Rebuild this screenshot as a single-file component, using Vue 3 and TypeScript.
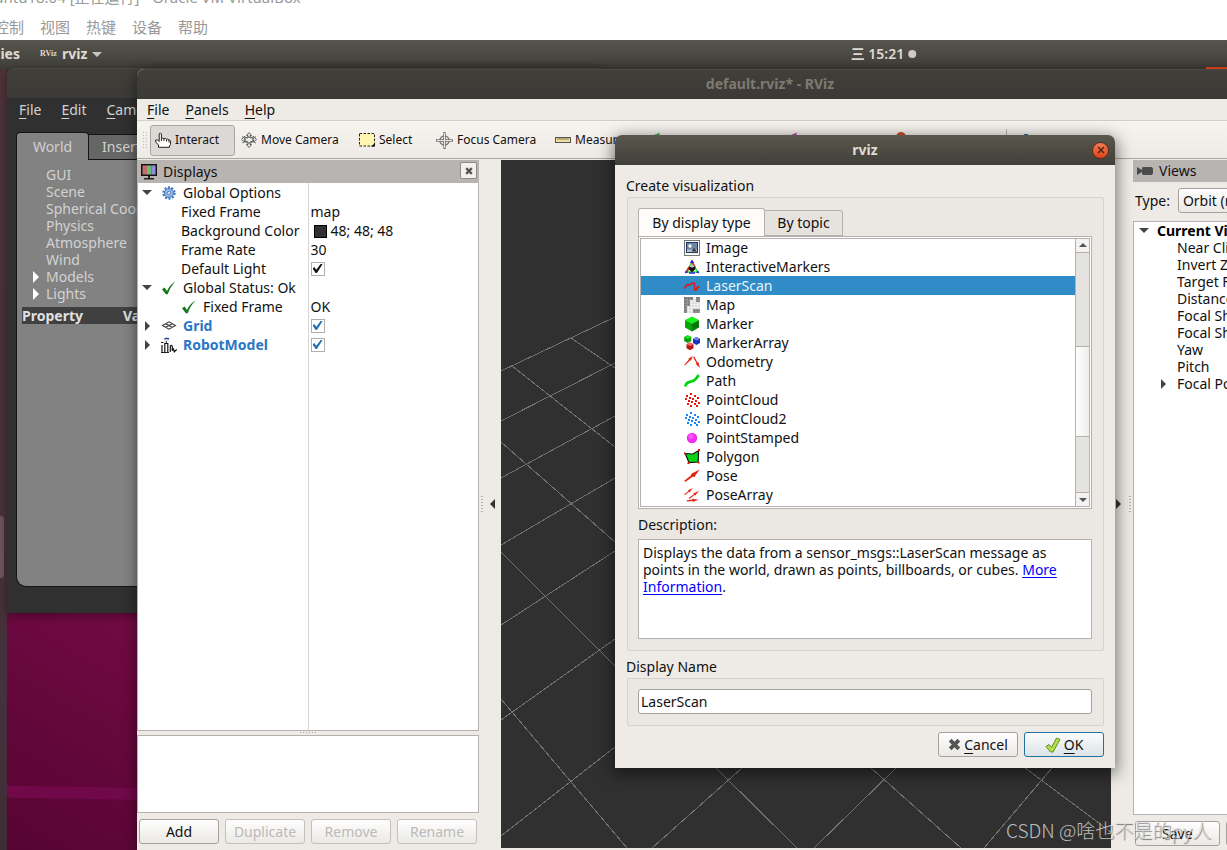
<script setup lang="ts">
import { ref } from 'vue'

interface PropertyRow {
  label: string
  value?: string
  arrow?: 'open' | 'closed'
  icon?: string
  level: 'top' | 'child' | 'status'
  strong?: boolean
  checked?: boolean
  swatch?: boolean
}

interface DisplayType {
  name: string
  icon: string
}

const hostMenu: string[] = ['控制', '视图', '热键', '设备', '帮助']

const worldItems = ['GUI', 'Scene', 'Spherical Coordinates', 'Physics', 'Atmosphere', 'Wind', 'Models', 'Lights']
const expandable = new Set(['Models', 'Lights'])

const properties = ref<PropertyRow[]>([
  { label: 'Global Options', arrow: 'open', icon: 'gear', level: 'top' },
  { label: 'Fixed Frame', value: 'map', level: 'child' },
  { label: 'Background Color', value: '48; 48; 48', level: 'child', swatch: true },
  { label: 'Frame Rate', value: '30', level: 'child' },
  { label: 'Default Light', level: 'child', checked: true },
  { label: 'Global Status: Ok', arrow: 'open', icon: 'check', level: 'top' },
  { label: 'Fixed Frame', value: 'OK', icon: 'check', level: 'status' },
  { label: 'Grid', arrow: 'closed', icon: 'grid', level: 'top', strong: true, checked: true },
  { label: 'RobotModel', arrow: 'closed', icon: 'robot', level: 'top', strong: true, checked: true },
])

const displayTypes: DisplayType[] = [
  { name: 'Image', icon: 'image' },
  { name: 'InteractiveMarkers', icon: 'interactive' },
  { name: 'LaserScan', icon: 'laser' },
  { name: 'Map', icon: 'map' },
  { name: 'Marker', icon: 'marker' },
  { name: 'MarkerArray', icon: 'markers' },
  { name: 'Odometry', icon: 'odometry' },
  { name: 'Path', icon: 'path' },
  { name: 'PointCloud', icon: 'cloud-red' },
  { name: 'PointCloud2', icon: 'cloud-blue' },
  { name: 'PointStamped', icon: 'point' },
  { name: 'Polygon', icon: 'polygon' },
  { name: 'Pose', icon: 'pose' },
  { name: 'PoseArray', icon: 'poses' },
]

const selected = ref('LaserScan')
const displayName = ref('LaserScan')

const viewItems = [
  'Near Clip Distance',
  'Invert Z Axis',
  'Target Frame',
  'Distance',
  'Focal Shape Size',
  'Focal Shape Fixed',
  'Yaw',
  'Pitch',
  'Focal Point',
]

function choose(name: string): void {
  selected.value = name
  displayName.value = name
}
</script>

<template>
  <div class="screen">
    <svg class="sprites" aria-hidden="true">
      <defs>
        <symbol id="gear" viewBox="0 0 16 16">
          <circle cx="8" cy="8" r="5.500" fill="none" stroke="#4377bd" stroke-width="2.400" stroke-dasharray="2 1.450" />
          <circle cx="8" cy="8" r="4.500" fill="#a9c5ea" stroke="#4a7dc2" />
          <path d="M8 4V12M4 8H12M5.200 5.200 10.800 10.800M10.800 5.200 5.200 10.800" stroke="#6d98d2" />
          <circle cx="8" cy="8" r="1.500" fill="#fff" stroke="#4a7dc2" stroke-width=".8" />
        </symbol>
        <symbol id="check" viewBox="0 0 16 16">
          <path d="M1 9.200 3.600 7.400 6 11C8 6.700 10.600 3.600 14.400 1.200 11 5 8.600 9 6.700 14.200H4.900Z" fill="#16761b" />
        </symbol>
        <symbol id="grid" viewBox="0 0 16 16">
          <path d="M1.500 7.500 8 3.800 14.500 7.500 8 11.200ZM4.800 5.700 11.200 9.300M4.800 9.300 11.200 5.700" fill="none" stroke="#3a3a3a" stroke-width="1.100" />
        </symbol>
        <symbol id="robot" viewBox="0 0 16 16">
          <path d="M3.500 1.500C5 .3 7 .4 8 1.800V3H3.500Z" fill="#fff" stroke="#888" stroke-width=".5" />
          <path d="M3.500 1.600H8" stroke="#2345b5" stroke-width="1.300" />
          <path d="M1 15V8M3.800 15V6.500H6.800V15M9.300 15V9Q10.500 7.500 11.300 9.500V14M12 11 13.300 14.800 15.700 12.500" fill="none" stroke="#151515" stroke-width="1.200" />
          <path d="M0 5.500H2.500M5.300 4V6M0 15.500H8" stroke="#222" />
        </symbol>
        <symbol id="image" viewBox="0 0 16 16">
          <rect x=".5" y=".5" width="15" height="15" fill="#f6f6f4" stroke="#777" />
          <rect x="2.500" y="2.500" width="11" height="10" fill="#6c86ad" stroke="#253a5c" />
          <path d="M3 9.500H13V12H3Z" fill="#b4c1d1" />
          <circle cx="6" cy="6" r="1.700" fill="#fffde0" />
          <path d="M7.500 11.500 10 8 13 11.500Z" fill="#35353a" />
        </symbol>
        <symbol id="interactive" viewBox="0 0 16 16">
          <path d="M2.500 13 8 3 13.500 13Z" fill="none" stroke="#25e02b" stroke-width="1.500" />
          <path d="M8 3 11 8.500M2.500 13 5 8.500" stroke="#ee2222" stroke-width="2" />
          <path d="M8 .6 10.200 4H5.800ZM.8 14.500 1.600 11.400 4 13.500ZM15.200 14.500 12 13.500 14.400 11.400Z" fill="#2320ed" />
          <path d="M5 14H11" stroke="#2320ed" stroke-width="1.500" />
          <path d="M8 5.500 11.200 7.500V10.500L8 13.300 4.800 10.500V7.500Z" fill="#111" />
          <path d="M8 5.300 11 7.200 8 8.800 5 7.200Z" fill="#c5c5c5" />
        </symbol>
        <symbol id="laser" viewBox="0 0 16 16">
          <path d="M.7 10.500 1.600 8.500 3.500 6.600 5 7.300 6 6.200 8.300 5.400 10.300 5.200 10.700 11.800 12.200 12 13.500 9 15.300 9.500" fill="none" stroke="#d3202d" stroke-width="1.900" stroke-linejoin="round" />
        </symbol>
        <symbol id="map" viewBox="0 0 16 16">
          <rect width="16" height="16" fill="#fafafa" />
          <path d="M0 0H9V3H6V9H3V16H0ZM12 0H16V5H12ZM9 12H16V16H9Z" fill="#777" />
          <path d="M3 0V16M6 0V16M9 0V16M12 0V16M15 0V16M0 3H16M0 6H16M0 9H16M0 12H16M0 15H16" stroke="#b8b8b8" stroke-width=".5" />
        </symbol>
        <symbol id="marker" viewBox="0 0 16 16">
          <path d="M8 .5 15 4 8 7.500 1 4Z" fill="#15f51c" />
          <path d="M1 4 8 7.500V15.500L1 11.500Z" fill="#04a80a" />
          <path d="M15 4 8 7.500V15.500L15 11.500Z" fill="#047d08" />
        </symbol>
        <symbol id="markers" viewBox="0 0 16 16">
          <path d="M3.700.3 7.300 2V6L3.700 8 .2 6V2Z" fill="#079b0e" /><path d="M3.700.3 7.300 2 3.700 4 .2 2Z" fill="#19ed20" />
          <path d="M12.500 2 16 3.800V8L12.500 10 9 8V3.800Z" fill="#1d32b5" /><path d="M12.500 2 16 3.800 12.500 5.500 9 3.800Z" fill="#6b87f5" />
          <path d="M6 7.500 9.500 9.200V13.200L6 15.300 2.500 13.200V9.200Z" fill="#b61919" /><path d="M6 7.500 9.500 9.200 6 11 2.500 9.200Z" fill="#ff6964" />
        </symbol>
        <symbol id="odometry" viewBox="0 0 16 16">
          <path d="M.2 10.900 4.900 5.400 4.300 4.800 8.800 2 6.900 6.700 6.200 6.200 1 11.600ZM9 3 10.300 2.500 13.300 8.300 14.300 8 16 14 11.800 10 12.500 9.200Z" fill="#e92413" />
        </symbol>
        <symbol id="path" viewBox="0 0 16 16">
          <path d="M1.300 13.500C1.900 10.500 3.500 9.200 6.500 8.700 10.200 8.400 12 6.300 14.700 2" fill="none" stroke="#00d80c" stroke-width="2.800" />
        </symbol>
        <symbol id="cloud" viewBox="0 0 16 16">
          <path d="M6 1h2v2H6ZM2 3h2v2H2ZM10 3h2v2h-2ZM5 5h2v2H5ZM1 6h2v2H1ZM8 6h2v2H8ZM13 5h2v2h-2ZM4 8h2v2H4ZM11 8h2v2h-2ZM7 9h2v2H7ZM3 11h2v2H3ZM10 11h2v2h-2ZM14 10h2v2h-2ZM6 13h2v2H6ZM12 13h2v2h-2Z" fill="currentColor" />
        </symbol>
        <symbol id="cloud-red" viewBox="0 0 16 16"><use href="#cloud" color="#ee1414" /></symbol>
        <symbol id="cloud-blue" viewBox="0 0 16 16"><use href="#cloud" color="#1688f3" /></symbol>
        <symbol id="point" viewBox="0 0 16 16">
          <circle cx="8" cy="8" r="5.200" fill="#ef2eee" /><circle cx="7" cy="6.500" r="2.500" fill="#fb5afa" />
        </symbol>
        <symbol id="polygon" viewBox="0 0 16 16">
          <path d="M1.200 4.500 9 5 14.600 1.500 14.200 13 5 13.700Z" fill="#09d413" stroke="#111" stroke-width="1.200" />
          <path d="M0 3.500h2v2H0ZM14 0h2v2h-2ZM3.500 13h2v2h-2ZM13.500 12.500h2v2h-2Z" fill="#ee1414" />
        </symbol>
        <symbol id="pose" viewBox="0 0 16 16">
          <path d="M.3 12.700 8 6.600 7.300 5.800 15.700 1.500 10.300 9 9.400 8.200 1.300 14Z" fill="#ed2412" /><path d="M7.500 6 10.300 8.800" stroke="#8e1308" />
        </symbol>
        <symbol id="poses" viewBox="0 0 16 16">
          <path d="M.3 7.300 4.500 4.100 4 3.300 8.700 1 5.600 5.400 5 4.800 .8 8.300ZM4.700 11 9.800 7.200 9.300 6.500 15 3.800 11.300 8.600 10.600 8.100 5.300 12ZM2.700 13.200 8.400 12.600V11.700L14.500 12.800 8.700 15V14L2.900 14.500Z" fill="#ed2412" />
        </symbol>
        <symbol id="hand" viewBox="0 0 16 16">
          <path d="M3.500 15.300V13L.7 10V8H2.500L4.200 9.500V2Q5.300-.2 6.400 2V6.500Q7.800 5.300 8.900 6.800 10.400 5.600 11.500 7.300 13.100 6.200 14 8 15.500 8 15.500 10V12.500L14.500 14V15.300Z" fill="#fff" stroke="#222" stroke-linejoin="round" />
          <path d="M6.400 6.500V9M8.900 6.800V9M11.500 7.300V9.500M14 8V10.500" fill="none" stroke="#222" />
        </symbol>
        <symbol id="move" viewBox="0 0 16 16">
          <path d="M8 .6 10.500 3.500H9V6L12.200 5.500V4L15.500 7.500 12.500 10V8.500L9 10V12.500H10.500L8 15.500 5.500 12.500H7V10L3.500 8.500V10L.5 7.500 3.800 4V5.500L7 6V3.500H5.500Z" fill="#eee" stroke="#555" stroke-width=".9" />
          <ellipse cx="8" cy="8" rx="4.500" ry="3" fill="none" stroke="#666" stroke-width=".9" />
          <path d="M1 4.500 5 7.500M15 4.500 11 7.500M1 11 5 9M15 11 11 9" stroke="#555" stroke-width=".8" />
        </symbol>
        <symbol id="select" viewBox="0 0 16 14">
          <rect x=".5" y=".5" width="15" height="12.500" fill="#fff6b2" stroke="#222" stroke-dasharray="2.500 1.500" />
          <path d="M12 13.500H16V10Z" fill="#111" />
        </symbol>
        <symbol id="focus" viewBox="0 0 17 17">
          <circle cx="8.500" cy="8.500" r="4.500" fill="none" stroke="#777" stroke-width="1.500" />
          <circle cx="8.500" cy="8.500" r="2" fill="none" stroke="#777" />
          <path d="M8.500 0V17M0 8.500H17" stroke="#777" stroke-width="2.400" />
          <path d="M8.500 1V16M1 8.500H16" stroke="#f5f2ee" stroke-width=".9" />
        </symbol>
        <symbol id="ruler" viewBox="0 0 16 6">
          <rect x=".5" y=".5" width="15" height="5" fill="#f0dfa3" stroke="#555" />
          <path d="M3 1V3M5 1V3M7 1V3M9 1V3M11 1V3M13 1V3" stroke="#66572b" stroke-width=".8" />
        </symbol>
        <symbol id="arrow-up" viewBox="0 0 16 16"><path d="M2 14 10 4 9 3 15 .5 13 7 12 6 4 15Z" fill="currentColor" /></symbol>
      </defs>
    </svg>

    <header class="host">
      <div class="host-title">Ubuntu18.04 [正在运行] - Oracle VM VirtualBox</div>
      <nav class="host-menu">
        <button v-for="item in hostMenu" :key="item" type="button">{{ item }}</button>
      </nav>
    </header>

    <main class="desktop">
      <div class="wallpaper"><span class="wave"></span></div>
      <div class="launcher"><span class="launcher-tile"></span></div>

      <div class="panel">
        <span class="panel-activities">Activities</span>
        <button type="button" class="panel-app"><b class="logo">RViz</b>rviz<i class="caret"></i></button>
        <span class="clock">三 15:21<i class="dot"></i></span>
      </div>

      <section class="window gazebo">
        <div class="dark-title"></div>
        <nav class="menu">
          <button type="button"><u>F</u>ile</button>
          <button type="button"><u>E</u>dit</button>
          <button type="button"><u>C</u>amera</button>
        </nav>
        <div class="gz-tabs">
          <button type="button" class="gz-tab active">World</button>
          <button type="button" class="gz-tab">Insert</button>
        </div>
        <div class="gz-pane">
          <ul>
            <li v-for="item in worldItems" :key="item"><i v-if="expandable.has(item)" class="tri"></i>{{ item }}</li>
          </ul>
          <div class="gz-head"><b>Property</b><b>Value</b></div>
        </div>
      </section>

      <section class="window rviz">
        <div class="dark-title">default.rviz* - RViz</div>
        <nav class="menu">
          <button type="button"><u>F</u>ile</button>
          <button type="button"><u>P</u>anels</button>
          <button type="button"><u>H</u>elp</button>
        </nav>
        <div class="toolbar">
          <span class="grip"></span>
          <button type="button" class="tool on"><svg><use href="#hand" /></svg>Interact</button>
          <button type="button" class="tool camera"><svg><use href="#move" /></svg>Move Camera</button>
          <button type="button" class="tool pick"><svg class="i-select"><use href="#select" /></svg>Select</button>
          <button type="button" class="tool focus"><svg class="i-focus"><use href="#focus" /></svg>Focus Camera</button>
          <button type="button" class="tool measure"><svg class="i-ruler"><use href="#ruler" /></svg>Measure</button>
          <button type="button" class="tool estimate" aria-label="2D Pose Estimate"><svg><use href="#arrow-up" /></svg></button>
          <button type="button" class="tool goal" aria-label="2D Nav Goal"><svg><use href="#arrow-up" /></svg></button>
          <button type="button" class="tool publish" aria-label="Publish Point"><svg viewBox="0 0 16 16"><circle cx="8" cy="5" r="5" fill="#d04a2c" /></svg></button>
          <span class="divider"></span>
          <button type="button" class="tool" aria-label="Add tool"><svg viewBox="0 0 16 16"><path d="M6 2h4v4h4v4h-4v4H6v-4H2V6h4Z" fill="#2f62a8" /></svg></button>
        </div>

        <div class="work">
          <aside class="displays">
            <div class="dock-title">
              <svg viewBox="0 0 16 16">
                <rect x=".5" y=".5" width="15" height="11" fill="#222" stroke="#111" />
                <path d="M1.500 1.500H6V10.500H1.500Z" fill="#c46b6b" /><path d="M6 1.500H10.500V10.500H6Z" fill="#69bd70" /><path d="M10.500 1.500H14.500V10.500H10.500Z" fill="#918ee0" />
                <path d="M7 12H9V14H7ZM3 14H13V15.500H3Z" fill="#222" />
              </svg>
              <span>Displays</span>
              <button type="button" class="dock-close" aria-label="Close">
                <svg viewBox="0 0 8 8"><path d="M1.200 1.200 6.800 6.800M6.800 1.200 1.200 6.800" stroke="#555" stroke-width="2.400" /></svg>
              </button>
            </div>
            <div class="tree">
              <table>
                <tbody>
                  <tr v-for="(row, index) in properties" :key="index">
                    <th scope="row">
                      <span class="name" :class="[row.level, { strong: row.strong }]">
                        <i class="twist" :class="row.arrow"></i>
                        <svg v-if="row.icon"><use :href="'#' + row.icon" /></svg>
                        {{ row.label }}
                      </span>
                    </th>
                    <td>
                      <input v-if="row.checked !== undefined" v-model="row.checked" type="checkbox" :class="{ blue: row.strong }" :aria-label="row.label" />
                      <i v-if="row.swatch" class="swatch"></i>{{ row.value }}
                    </td>
                  </tr>
                  <tr class="rest"><th></th><td></td></tr>
                </tbody>
              </table>
            </div>
            <div class="splitter"></div>
            <div class="help"></div>
            <div class="actions">
              <button type="button" class="btn">Add</button>
              <button type="button" class="btn" disabled>Duplicate</button>
              <button type="button" class="btn" disabled>Remove</button>
              <button type="button" class="btn" disabled>Rename</button>
            </div>
          </aside>

          <div class="strip left"><span class="vgrip"></span><i class="fold"></i></div>

          <div class="render">
            <svg aria-hidden="true">
              <path
                d="M0 211 114 157M0 261 114 203M0 318 114 256M0 385 114 318M0 465 114 391M0 560 114 479M0 676 114 587M151 688 241 608M313 688 395 608M483 688 551 608M11 206 114 287M70 178 114 208M0 282 114 382M0 392 114 506M0 539 126 688M214 607 296 688M370 608 460 688M524 608 610 672"
                fill="none" stroke="#8d8d8d" stroke-width="1" shape-rendering="crispEdges" opacity=".7"
              />
            </svg>
          </div>

          <div class="strip right"><i class="fold"></i><span class="vgrip"></span></div>

          <aside class="views">
            <div class="dock-title">
              <svg viewBox="0 0 16 16"><path d="M0 4 5 7V4.500L6.500 4H14.500L16 5.500V10.500L14.500 12H6.500L5 11V9L0 12Z" fill="#4b4b4b" /></svg>
              <span>Views</span>
            </div>
            <div class="type-row">
              <label for="view-type">Type:</label>
              <select id="view-type"><option>Orbit (rviz)</option></select>
            </div>
            <div class="view-tree">
              <div class="view-root"><i class="twist open"></i>Current View</div>
              <ul>
                <li v-for="item in viewItems" :key="item"><i v-if="item === 'Focal Point'" class="twist closed"></i>{{ item }}</li>
              </ul>
            </div>
            <div class="actions">
              <button type="button" class="btn">Save</button>
              <button type="button" class="btn" aria-label="Remove view"></button>
              <button type="button" class="btn" aria-label="Rename view"></button>
            </div>
          </aside>
        </div>
      </section>

      <i class="alert-edge"></i>

      <form class="dialog" @submit.prevent>
        <div class="dialog-title">
          rviz
          <button type="button" aria-label="Close"><svg viewBox="0 0 8 8"><path d="M1 1 7 7M7 1 1 7" stroke="#4b2012" stroke-width="1.400" /></svg></button>
        </div>
        <div class="dialog-body">
          <div class="caption">Create visualization</div>
          <div class="group">
            <div class="tabs" role="tablist">
              <button type="button" role="tab" class="tab active" aria-selected="true">By display type</button>
              <button type="button" role="tab" class="tab" aria-selected="false">By topic</button>
            </div>
            <div class="list-frame">
              <ul class="types" role="listbox" aria-label="Display types">
                <li
                  v-for="type in displayTypes"
                  :key="type.name"
                  role="option"
                  :aria-selected="type.name === selected"
                  :class="{ selected: type.name === selected }"
                  @click="choose(type.name)"
                >
                  <svg><use :href="'#' + type.icon" /></svg><span>{{ type.name }}</span>
                </li>
              </ul>
              <div class="scroll">
                <span class="step up"></span>
                <span class="track"></span>
                <span class="thumb"></span>
                <span class="track short"></span>
                <span class="step down"></span>
              </div>
            </div>
            <div class="caption description">Description:</div>
            <div class="text">
              Displays the data from a sensor_msgs::LaserScan message as<br />
              points in the world, drawn as points, billboards, or cubes. <a href="#more">More<br />Information</a>.
            </div>
          </div>
          <label class="caption second" for="display-name">Display Name</label>
          <div class="group name-group">
            <input id="display-name" v-model="displayName" type="text" />
          </div>
          <div class="dialog-buttons">
            <button type="button" class="btn">
              <svg class="i-cancel" viewBox="0 0 12 12"><path d="M2 2 10 10M10 2 2 10" stroke="#555" stroke-width="3.600" /></svg><span><u>C</u>ancel</span>
            </button>
            <button type="submit" class="btn primary">
              <svg viewBox="0 0 16 16"><path d="M1 9.500 4 7.500 6.500 10.500 11.500 1 15 2.500 8 15H5.500Z" fill="#b4dc4c" stroke="#5d8f27" /></svg><span><u>O</u>K</span>
            </button>
          </div>
        </div>
      </form>

      <div class="watermark">CSDN @啥也不是的py人</div>
    </main>
  </div>
</template>

<style>
html,
body,
#app {
  height: 100%;
}

body {
  overflow: hidden;
}
</style>

<style scoped>
* {
  box-sizing: border-box;
}

.screen {
  display: flex;
  flex-direction: column;
  height: 100%;
  overflow: hidden;
  background: #fff;
  color: #111;
  font: 14px/18px "Noto Sans", "Noto Sans CJK SC", sans-serif;
}

.sprites {
  position: absolute;
  width: 0;
  height: 0;
}

button,
input,
select {
  margin: 0;
  padding: 0;
  border: 0;
  background: none;
  color: inherit;
  font: inherit;
}

ul {
  margin: 0;
  padding: 0;
  list-style: none;
}

svg {
  display: block;
  flex: none;
  width: 16px;
  height: 16px;
}

u {
  text-decoration-thickness: 1px;
  text-underline-offset: 3px;
}

.host {
  height: 40px;
  overflow: hidden;
  color: #999;
  font: 15px/20px "Noto Sans CJK SC", sans-serif;
  white-space: nowrap;
}

.host-title {
  height: 17px;
  margin: -13px 0 0 -26px;
  font-family: "Noto Sans", "Noto Sans CJK SC", sans-serif;
}

.host-menu {
  display: flex;
  gap: 16px;
  margin: 13px 0 0 -6px;
}

.desktop {
  position: relative;
  flex: 1;
  overflow: hidden;
}

.wallpaper {
  position: absolute;
  inset: 0;
  overflow: hidden;
  background: linear-gradient(30deg, #560432, #700a43 260px);
}

.wave {
  position: absolute;
  left: 0;
  bottom: 50px;
  width: 300px;
  height: 12px;
  background: #70084a;
  transform: rotate(1deg);
}

.launcher {
  position: absolute;
  left: 0;
  top: 28px;
  bottom: 0;
  width: 7px;
  background: linear-gradient(#4e343a, #45313b 80%, #3f2d35);
}

.launcher-tile {
  position: absolute;
  left: 0;
  top: 448px;
  width: 4px;
  height: 62px;
  border-radius: 0 3px 3px 0;
  background: #6d555e;
}

.panel {
  position: absolute;
  inset: 0 0 auto;
  display: flex;
  align-items: center;
  height: 30px;
  padding-bottom: 2px;
  background: linear-gradient(#56544c, #403f3a 28px, #383733);
  color: #dfdbd2;
  font-weight: 700;
}

.panel-activities {
  width: 20px;
  direction: rtl;
  white-space: nowrap;
}

.panel-app {
  display: flex;
  align-items: center;
  margin-left: 20px;
}

.logo {
  width: 22px;
  font: bold 8px/10px "Liberation Serif", serif;
  text-align: left;
}

.caret {
  margin-left: 5px;
  border: 5px solid transparent;
  border-top-color: #c9c5bd;
  border-bottom: 0;
}

.clock {
  position: absolute;
  left: 72%;
  display: flex;
  align-items: center;
  font-weight: 600;
  transform: translateX(-50%);
}

.dot {
  width: 8px;
  height: 8px;
  margin-left: 4px;
  border-radius: 50%;
  background: #cfccc6;
}

.window {
  position: absolute;
  display: flex;
  flex-direction: column;
}

.dark-title {
  flex: none;
  height: 30px;
  border-top: 1px solid #4a4943;
  border-radius: 7px 7px 0 0;
  background: linear-gradient(#403f3a, #3b3a36);
  color: #7d7a72;
  font-weight: 700;
  line-height: 28px;
  text-align: center;
}

.gazebo {
  top: 28px;
  left: 7px;
  width: 600px;
  height: 545px;
  border-radius: 7px 7px 0 0;
  background: #303030;
  box-shadow: 0 2px 10px rgba(0, 0, 0, 0.4);
  color: #d2d2d2;
}

.menu {
  display: flex;
  flex: none;
  gap: 16px;
  height: 21px;
  padding-left: 10px;
}

.gazebo .menu {
  gap: 20px;
  height: 34px;
  padding: 0 0 10px 12px;
}

.gz-tabs {
  display: flex;
  align-items: flex-end;
  height: 28px;
  padding-left: 9px;
}

.gz-tab {
  width: 66px;
  height: 26px;
  border: 1px solid #141414;
  border-left: 0;
  background: #666;
  color: #d0d0d0;
}

.gz-tab.active {
  width: 73px;
  height: 28px;
  border-left: 1px solid #141414;
  border-bottom: 0;
  border-radius: 4px 4px 0 0;
  background: #828282;
}

.gz-pane {
  flex: 1;
  margin: 0 10px 26px 9px;
  padding: 6px 5px;
  border: 1px solid #141414;
  border-top: 0;
  border-radius: 0 0 10px 10px;
  background: #828282;
}

.gz-pane li {
  display: flex;
  align-items: center;
  position: relative;
  height: 17px;
  padding-left: 24px;
}

.tri {
  position: absolute;
  left: 11px;
  border: 6px solid transparent;
  border-left-color: #fff;
  border-right: 0;
}

.gz-head {
  display: flex;
  height: 17px;
  margin-top: 5px;
  background: #404040;
  color: #e0e0e0;
  line-height: 17px;
}

.gz-head b {
  width: 101px;
}

.rviz {
  top: 29px;
  right: -176px;
  bottom: 0;
  left: 137px;
  border-radius: 7px 7px 0 0;
  background: #eeebe6;
  box-shadow: 0 2px 14px rgba(0, 0, 0, 0.5);
}

.toolbar {
  display: flex;
  flex: none;
  align-items: center;
  height: 39px;
  padding-top: 1px;
  border-top: 1px solid #d2cec9;
  border-bottom: 1px solid #aaa7a3;
  background: linear-gradient(#f7f4f0, #eeeae5);
  font-size: 12px;
}

.grip {
  width: 5px;
  height: 18px;
  margin: 0 3px 0 5px;
  background: radial-gradient(circle, #bbb7b2 1px, transparent 1px) 0 0 / 3px 3px;
}

.tool {
  display: flex;
  flex: none;
  align-items: center;
  gap: 4px;
  height: 31px;
  padding-left: 5px;
  white-space: nowrap;
}

.tool.on {
  width: 85px;
  padding-left: 4px;
  border: 1px solid #aaa6a2;
  border-radius: 3px;
  background: #dcd8d5;
}

.tool.camera {
  width: 118px;
  padding-left: 6px;
}

.tool.pick {
  width: 78px;
  padding-left: 6px;
}

.tool.focus {
  width: 119px;
}

.tool.measure {
  width: 90px;
}

.tool.estimate {
  width: 137px;
  color: #35b94a;
}

.tool.goal {
  width: 111px;
  color: #cc38b5;
}

.tool.publish {
  width: 118px;
}

.divider {
  width: 1px;
  height: 22px;
  margin-right: 6px;
  background: #bbb7b2;
}

.i-select {
  height: 14px;
}

.i-focus {
  width: 17px;
  height: 17px;
}

.i-ruler {
  height: 6px;
}

.work {
  display: flex;
  flex: 1;
  min-height: 0;
  padding: 1px 0 2px;
}

.displays {
  display: flex;
  flex: none;
  flex-direction: column;
  width: 342px;
}

.dock-title {
  display: flex;
  flex: none;
  align-items: center;
  gap: 6px;
  height: 23px;
  padding: 0 2px 0 4px;
  background: #b8b4b1;
}

.dock-close {
  display: grid;
  place-items: center;
  width: 17px;
  height: 17px;
  margin: -2px 0 0 auto;
  border: 1px solid #8f8c88;
  border-radius: 2px;
  background: #f3f1ee;
}

.dock-close svg {
  width: 8px;
  height: 8px;
}

.tree {
  flex: 1;
  min-height: 0;
  border: 1px solid #b5b1ae;
  border-top: 0;
  background: #fff;
}

table {
  width: 100%;
  height: 100%;
  border-collapse: collapse;
  table-layout: fixed;
}

tr {
  height: 19px;
}

tr.rest {
  height: auto;
}

th,
td {
  padding: 0;
  font-weight: 400;
  text-align: left;
  white-space: nowrap;
}

th {
  width: 170px;
  border-right: 1px solid #d9d6d3;
}

td {
  padding-left: 2px;
}

.name {
  display: flex;
  align-items: center;
  height: 19px;
}

.name.top svg {
  margin: 0 6px 0 5px;
}

.name.child {
  padding-left: 27px;
}

.name.status {
  padding-left: 27px;
}

.name.status svg {
  margin: 0 6px 0 0;
}

.name.strong {
  color: #2a76c6;
  font-weight: 700;
}

.twist {
  display: flex;
  flex: none;
  align-items: center;
  justify-content: center;
  width: 16px;
}

.name.top .twist {
  width: 18px;
}

.twist.open::before {
  border: 5px solid transparent;
  border-top-color: #444;
  border-bottom: 0;
  content: "";
}

.twist.closed::before {
  border: 5px solid transparent;
  border-left-color: #444;
  border-right: 0;
  content: "";
}

.swatch {
  display: inline-block;
  width: 13px;
  height: 13px;
  margin: 0 4px 0 3px;
  border: 1px solid #000;
  background: #303030;
  vertical-align: -2px;
}

input[type="checkbox"] {
  display: grid;
  place-items: center;
  width: 14px;
  height: 14px;
  border: 1px solid #b2aeaa;
  background: #fff;
  color: #111;
  appearance: none;
}

input[type="checkbox"].blue {
  color: #2470b5;
}

input[type="checkbox"]:checked::before {
  width: 10px;
  height: 10px;
  background: currentColor;
  clip-path: polygon(0 50%, 18% 36%, 38% 62%, 85% 0, 100% 8%, 44% 96%, 32% 96%);
  content: "";
}

.splitter {
  flex: none;
  height: 4px;
}

.splitter::before {
  display: block;
  width: 17px;
  height: 1px;
  margin: 1px auto;
  background: repeating-linear-gradient(90deg, #aaa6a2 0 1px, transparent 1px 3px);
  content: "";
}

.help {
  flex: none;
  height: 78px;
  border: 1px solid #b5b1ae;
  background: #fff;
}

.actions {
  display: flex;
  flex: none;
  gap: 6px;
  padding: 6px 2px 4px;
}

.btn {
  display: flex;
  flex: 1;
  align-items: center;
  justify-content: center;
  height: 25px;
  border: 1px solid #a5a19d;
  border-radius: 3px;
  background: linear-gradient(#fefefe, #ebe9e6);
}

.btn:disabled {
  border-color: #c4c0bc;
  color: #bcb9b6;
}

.strip {
  display: flex;
  flex: none;
  align-items: center;
  width: 22px;
}

.strip.left {
  gap: 7px;
  padding-left: 2px;
}

.strip.right {
  gap: 8px;
  padding-left: 5px;
}

.vgrip {
  width: 2px;
  height: 16px;
  background: repeating-linear-gradient(#b5b1ad 0 1px, transparent 1px 3px);
}

.fold {
  border: 5px solid transparent;
}

.left .fold {
  border-right-color: #333;
  border-left: 0;
}

.right .fold {
  border-left-color: #333;
  border-right: 0;
}

.render {
  flex: 1;
  min-width: 0;
  overflow: hidden;
  background: #303030;
}

.render svg {
  width: 100%;
  height: 100%;
}

.views {
  display: flex;
  flex: none;
  flex-direction: column;
  width: 270px;
}

.views .dock-title {
  height: 22px;
}

.type-row {
  display: flex;
  align-items: center;
  gap: 8px;
  height: 39px;
  padding: 0 2px 2px;
}

.type-row select {
  flex: 1;
  height: 25px;
  padding-left: 4px;
  border: 1px solid #a5a19d;
  border-radius: 3px;
  background: linear-gradient(#fefefe, #ebe9e6);
  appearance: none;
}

.view-tree {
  flex: 1;
  min-height: 0;
  border: 1px solid #b5b1ae;
  background: #fff;
}

.view-root {
  display: flex;
  align-items: center;
  gap: 5px;
  height: 17px;
  padding-left: 2px;
  color: #000;
  font-weight: 700;
}

.view-tree li {
  display: flex;
  align-items: center;
  position: relative;
  height: 17px;
  padding-left: 43px;
}

.view-tree li .twist {
  position: absolute;
  left: 21px;
}

.views .actions {
  padding: 6px 2px 2px;
}

.alert-edge {
  position: absolute;
  top: 27px;
  right: 0;
  width: 21px;
  height: 2px;
  background: #c63b16;
}

.dialog {
  position: absolute;
  top: 95px;
  left: 615px;
  width: 500px;
  border-radius: 7px 7px 0 0;
  background: #eeebe6;
  box-shadow: 0 4px 16px 2px rgba(0, 0, 0, 0.5);
}

.dialog-title {
  display: flex;
  align-items: center;
  justify-content: center;
  position: relative;
  height: 30px;
  border-radius: 7px 7px 0 0;
  background: linear-gradient(#5a574d, #403f39);
  color: #dfdbd2;
  font-weight: 700;
}

.dialog-title button {
  display: grid;
  place-items: center;
  position: absolute;
  right: 6px;
  width: 17px;
  height: 17px;
  border: 1px solid #5b2a18;
  border-radius: 50%;
  background: linear-gradient(#f17b53, #df4417);
}

.dialog-title svg {
  width: 8px;
  height: 8px;
}

.dialog-body {
  display: flex;
  flex-direction: column;
  padding: 12px 11px 11px 12px;
}

.caption {
  height: 18px;
  margin-left: -1px;
}

.group {
  margin-top: 2px;
  padding: 10px 11px 11px 10px;
  border: 1px solid #d6d2cd;
  border-radius: 2px;
  background: #ebe8e3;
}

.tabs {
  display: flex;
  align-items: flex-end;
  height: 28px;
}

.tab {
  width: 78px;
  height: 26px;
  border: 1px solid #b5b1ae;
  border-left: 0;
  border-radius: 0 3px 0 0;
  background: #e6e3df;
}

.tab.active {
  width: 127px;
  height: 28px;
  border-left: 1px solid #b5b1ae;
  border-bottom: 0;
  border-radius: 3px 3px 0 0;
  background: #fdfcfb;
}

.list-frame {
  display: flex;
  height: 273px;
  padding: 1px 2px;
  border: 1px solid #b5b1ae;
  outline: 1px solid #b5b1ae;
  outline-offset: -3px;
  background: #fff;
}

.types {
  flex: 1;
  overflow: hidden;
}

.types li {
  display: flex;
  align-items: center;
  gap: 6px;
  height: 19px;
  padding-left: 43px;
}

.types .selected {
  background: #308cc6;
  color: #e9f3fa;
}

.scroll {
  display: flex;
  flex-direction: column;
  width: 14px;
  border-left: 1px solid #b5b1ae;
}

.step {
  display: grid;
  place-items: center;
  height: 14px;
  background: #f5f3f1;
}

.step::before {
  border: 4px solid transparent;
  content: "";
}

.up::before {
  border-top: 0;
  border-bottom-color: #555;
}

.down::before {
  border-bottom: 0;
  border-top-color: #555;
}

.track {
  flex: 95;
  border-top: 1px solid #b5b1ae;
  background: #e4e3e0;
}

.track.short {
  flex: 56;
  border-top: 0;
  border-bottom: 1px solid #b5b1ae;
}

.thumb {
  flex: 90;
  border: solid #b5b1ae;
  border-width: 1px 0;
  background: linear-gradient(90deg, #fff, #efedea);
}

.description {
  margin: 7px 0 5px;
}

.text {
  height: 100px;
  padding: 4px;
  border: 1px solid #b5b1ae;
  background: #fff;
  line-height: 17px;
  white-space: nowrap;
}

.text a {
  color: #00f;
  text-underline-offset: 2px;
}

.second {
  margin-top: 7px;
}

.name-group {
  margin-top: 2px;
}

.name-group input {
  display: block;
  width: 100%;
  height: 25px;
  padding: 0 2px;
  border: 1px solid #a5a19d;
  border-radius: 3px;
  background: #fff;
}

.dialog-buttons {
  display: flex;
  justify-content: flex-end;
  gap: 6px;
  margin-top: 6px;
}

.dialog-buttons .btn {
  flex: none;
  gap: 3px;
  width: 80px;
}

.btn.primary {
  border-color: #2470a0;
  background: linear-gradient(#fbfcfc, #dce3e7);
}

.i-cancel {
  width: 13px;
  height: 13px;
}

.watermark {
  position: absolute;
  right: 16px;
  bottom: 6px;
  color: rgba(225, 225, 225, 0.8);
  font: 300 19px/28px "Noto Sans CJK SC", sans-serif;
  text-shadow: 1px 1px 1px rgba(60, 60, 60, 0.7);
  white-space: nowrap;
}
</style>
